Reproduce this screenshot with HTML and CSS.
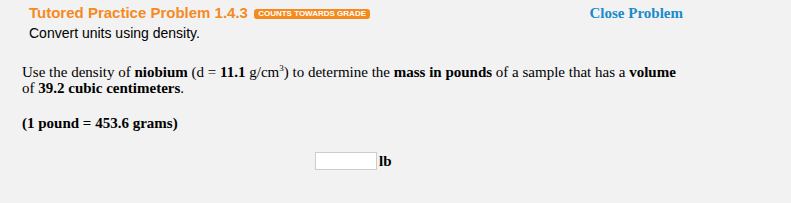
FILE: index.html
```html
<!DOCTYPE html>
<html lang="en">
<head>
    <meta charset="UTF-8">
    <title>Tutored Practice Problem 1.4.3</title>
    <link rel="stylesheet" href="styles.css">
</head>
<body>

<div class="header">
    <div class="heading">
        <h2>Tutored Practice Problem 1.4.3 <span class="badge">COUNTS TOWARDS GRADE</span></h2>
        <p class="subtitle">Convert units using density.</p>
    </div>
    <a class="close" href="#">Close Problem</a>
</div>

<div class="problem">
    <p>Use the density of <b>niobium</b> (d = <b>11.1</b> g/cm<sup>3</sup>) to determine the <b>mass in pounds</b> of a sample that has a <b>volume</b> of <b>39.2 cubic centimeters</b>.</p>
    <p class="note"><b>(1 pound = 453.6 grams)</b></p>

    <div class="answer">
        <input type="text">
        <b>lb</b>
    </div>
</div>

</body>
</html>
```

FILE: styles.css
```css
body {
    margin: 0;
    background-color: #f2f2f2;
    color: #000;
    font-family: "Liberation Serif", serif;
}

/* Header */
.header {
    display: flex;
    justify-content: space-between;
    align-items: flex-start;
    padding: 4px 108px 0 29px;
}

.heading h2 {
    margin: 0;
    font-family: "Liberation Sans", Arial, sans-serif;
    font-size: 15px;
    color: #f58a1f;
    line-height: 18px;
}

.badge {
    display: inline-block;
    vertical-align: 2px;
    background-color: #f58a1f;
    color: white;
    font-size: 8px;
    line-height: 10px;
    padding: 0 4px;
    border-radius: 3px;
    margin-left: 2px;
}

.subtitle {
    margin: 3px 0 0 0;
    font-family: "Liberation Sans", Arial, sans-serif;
    font-size: 14px;
    line-height: 17px;
}

.close {
    font-weight: bold;
    font-size: 15px;
    color: #1a8acb;
    text-decoration: none;
    line-height: 18px;
}

/* Problem text */
.problem {
    width: 662px;
    padding: 22px 22px 0 22px;
    font-size: 15px;
    line-height: 16px;
}

.problem p {
    margin: 0 0 19px 0;
}

.problem p.note {
    margin-bottom: 21px;
}

.problem sup {
    font-size: 9px;
    line-height: 0;
}

.answer {
    display: flex;
    align-items: center;
    gap: 2px;
    padding-left: 293px;
}

.answer input {
    width: 56px;
    height: 14px;
    border: 1px solid #ccc;
    background: white;
    padding: 1px 2px;
}
```
